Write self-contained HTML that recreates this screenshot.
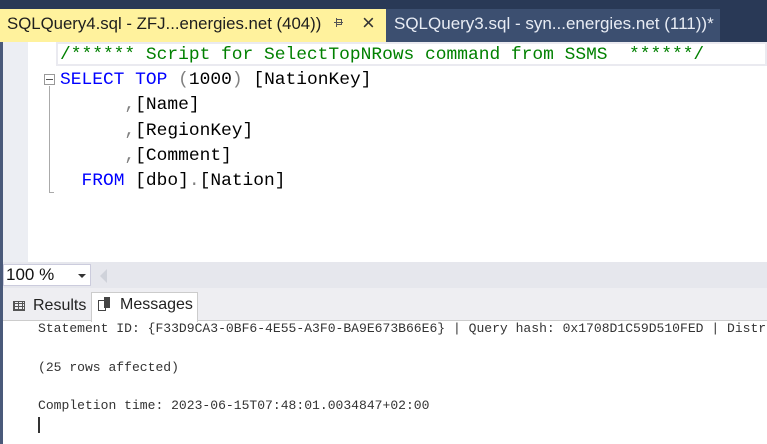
<!DOCTYPE html>
<html><head><meta charset="utf-8"><style>
*{margin:0;padding:0;box-sizing:border-box}
body{width:767px;height:444px;overflow:hidden;background:#fff;position:relative;font-family:"Liberation Sans",sans-serif}
.a{position:absolute}
.code{font-family:"Liberation Mono",monospace;font-size:17.9px;white-space:pre;line-height:25.2px}
.msg{font-family:"Liberation Mono",monospace;font-size:13.05px;white-space:pre;color:#333}
.kw{color:#0000ff}.gr{color:#808080}.cm{color:#008000}
</style></head><body>
<div class="a" style="left:0;top:0;width:767px;height:9px;background:#293956"></div>
<div class="a" style="left:0;top:9px;width:767px;height:33px;background:#293956"></div>
<div class="a" style="left:0;top:9px;width:386px;height:33px;background:#fff29d"></div>
<div class="a" style="left:7px;top:14px;font-size:16.8px;color:#1e1e1e;white-space:nowrap">SQLQuery4.sql - ZFJ...energies.net (404))</div>
<div class="a" style="left:334px;top:22px;width:9px;height:1px;background:#555"></div>
<div class="a" style="left:337px;top:19px;width:5px;height:6px;border:1px solid #555;border-left:none"></div>
<div class="a" style="left:336px;top:18px;width:1px;height:9px;background:#555"></div>
<div class="a" style="left:362px;top:10px;font-size:22px;color:#333">×</div>
<div class="a" style="left:386px;top:9px;width:334px;height:33px;background:#3c4f70"></div>
<div class="a" style="left:394px;top:14px;font-size:17px;color:#e8ecf4;white-space:nowrap">SQLQuery3.sql - syn...energies.net (111))*</div>
<div class="a" style="left:0;top:42px;width:3px;height:402px;background:#4a5a7a"></div>
<div class="a" style="left:3px;top:42px;width:25px;height:220px;background:#eceef3"></div>
<div class="a" style="left:56px;top:42px;width:711px;height:24px;border:2px solid #eaeaf0"></div>
<div class="a code" style="left:60px;top:43px"><span class="cm">/****** Script for SelectTopNRows command from SSMS  ******/</span>
<span class="kw">SELECT</span> <span class="kw">TOP</span> <span class="gr">(</span>1000<span class="gr">)</span> [NationKey]
      <span class="gr">,</span>[Name]
      <span class="gr">,</span>[RegionKey]
      <span class="gr">,</span>[Comment]
  <span class="kw">FROM</span> [dbo]<span class="gr">.</span>[Nation]</div>
<div class="a" style="left:44px;top:74px;width:11px;height:11px;border:1px solid #999;background:#fff"></div>
<div class="a" style="left:46px;top:79px;width:7px;height:1px;background:#555"></div>
<div class="a" style="left:49px;top:86px;width:1px;height:107px;background:#aaa"></div>
<div class="a" style="left:49px;top:192px;width:5px;height:1px;background:#aaa"></div>
<div class="a" style="left:3px;top:262px;width:764px;height:26px;background:#e6e7ed"></div>
<div class="a" style="left:3px;top:264px;width:88px;height:22px;background:#fff;border:1px solid #ccd"></div>
<div class="a" style="left:6px;top:265px;font-size:17px;color:#111">100 %</div>
<div class="a" style="left:78px;top:274px;border-left:4px solid transparent;border-right:4px solid transparent;border-top:4px solid #333"></div>
<div class="a" style="left:100px;top:269px;border-top:7px solid transparent;border-bottom:7px solid transparent;border-right:7px solid #cfd2da"></div>
<div class="a" style="left:3px;top:288px;width:764px;height:33px;background:#eeeef2;border-bottom:1px solid #ccc"></div>
<div class="a" style="left:13px;top:301px;width:12px;height:10px;border:1px solid #555;background:repeating-linear-gradient(90deg,#555 0 1px,transparent 1px 4px),repeating-linear-gradient(0deg,#555 0 1px,transparent 1px 3px)"></div>
<div class="a" style="left:33px;top:297px;font-size:16px;color:#222">Results</div>
<div class="a" style="left:91px;top:292px;width:107px;height:30px;background:#fff;border:1px solid #ccc;border-bottom:none"></div>
<div class="a" style="left:98px;top:300px;width:8px;height:11px;border:1px solid #444"></div>
<div class="a" style="left:104px;top:297px;width:6px;height:11px;background:#444"></div>
<div class="a" style="left:120px;top:296px;font-size:16px;color:#222">Messages</div>
<div class="a msg" style="left:38px;top:321px">Statement ID: {F33D9CA3-0BF6-4E55-A3F0-BA9E673B66E6} | Query hash: 0x1708D1C59D510FED | Distr</div>
<div class="a msg" style="left:38px;top:360px">(25 rows affected)</div>
<div class="a msg" style="left:38px;top:398px">Completion time: 2023-06-15T07:48:01.0034847+02:00</div>
<div class="a" style="left:38px;top:417px;width:2px;height:16px;background:#333"></div>
</body></html>
